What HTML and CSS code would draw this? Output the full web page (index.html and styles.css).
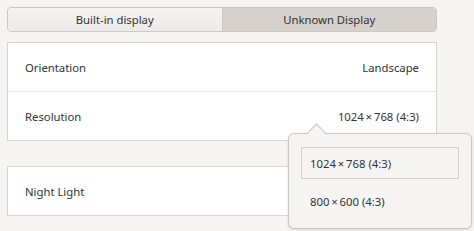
FILE: index.html
```html
<!DOCTYPE html>
<html lang="en">
<head>
  <meta charset="UTF-8">
  <title>Displays</title>
  <link rel="stylesheet" href="styles.css">
</head>
<body>
  <div class="page">
    <div class="tabs">
      <div class="tab">Built-in display</div>
      <div class="tab active">Unknown Display</div>
    </div>

    <div class="listbox">
      <div class="row"><span>Orientation</span><span>Landscape</span></div>
      <div class="row"><span>Resolution</span><span>1024&#8201;×&#8201;768 (4:3)</span></div>
    </div>

    <div class="listbox">
      <div class="row"><span>Night Light</span></div>
    </div>
  </div>

  <div class="popover">
    <div class="item selected">1024&#8201;×&#8201;768 (4:3)</div>
    <div class="item">800&#8201;×&#8201;600 (4:3)</div>
  </div>
</body>
</html>
```

FILE: styles.css
```css
body { margin: 0; background: #f6f5f4; font-family: "Noto Sans", sans-serif; font-size: 11.3px; color: #2e3436; }
.page { padding: 7px; width: 430px; }

.tabs { display: flex; height: 23px; border: 1px solid #cdc7c2; border-radius: 4px; overflow: hidden; margin-bottom: 10px; }
.tab { flex: 1; display: flex; align-items: center; justify-content: center; background: linear-gradient(#f4f3f2, #edebe9); }
.tab.active { background: #d6d1cd; border-left: 1px solid #cdc7c2; }

.listbox { background: #fff; border: 1px solid #d8d4d0; margin-bottom: 25px; }
.listbox:last-child { margin-bottom: 0; }
.row { height: 48px; display: flex; align-items: center; justify-content: space-between; padding: 0 17px; }
.row + .row { border-top: 1px solid #ebe9e7; }

.popover { position: absolute; left: 288px; top: 133px; width: 158px; height: 81px; padding: 13px 12px 0 12px; background: #f6f5f4; border: 1px solid #cdc7c2; border-radius: 6px; box-shadow: 0 1px 3px rgba(0,0,0,0.12); }
.popover::before { content: ""; position: absolute; left: 21px; top: -8px; width: 12px; height: 12px; background: #f6f5f4; border-left: 1px solid #cdc7c2; border-top: 1px solid #cdc7c2; transform: rotate(45deg); }
.item { height: 30px; display: flex; align-items: center; padding: 0 8px; border: 1px solid transparent; }
.item.selected { border-color: #d5d0cc; }
.item + .item { height: 42px; }
```
